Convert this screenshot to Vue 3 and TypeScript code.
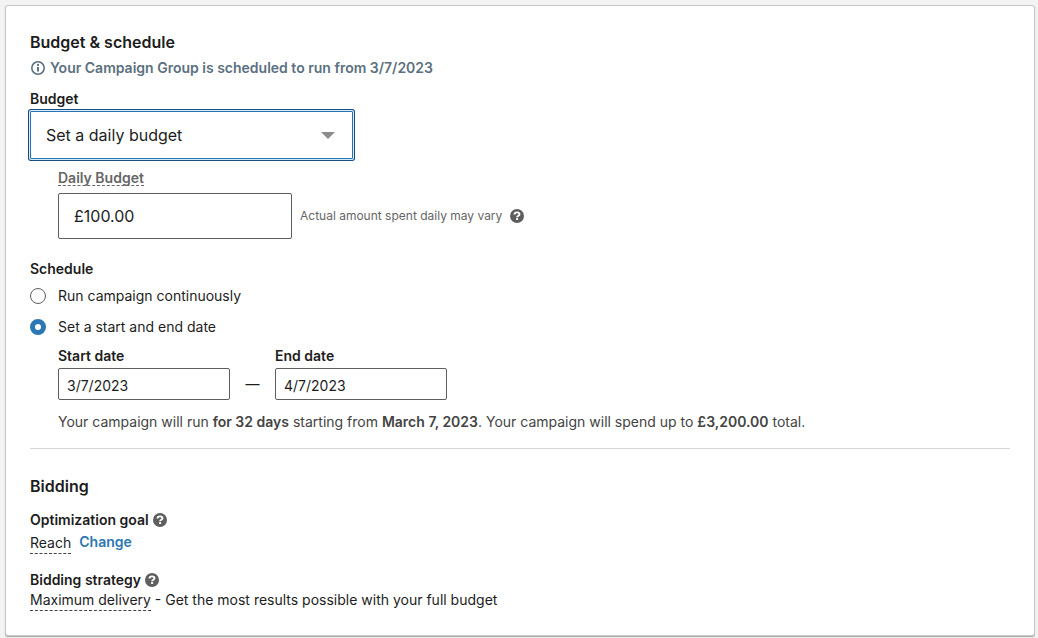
<script setup lang="ts">
import { ref } from 'vue'

const budgetType = ref('daily')
const dailyBudget = ref('£100.00')
const scheduleType = ref('range')
const startDate = ref('3/7/2023')
const endDate = ref('4/7/2023')
</script>

<template>
  <main class="page">
    <form class="card" @submit.prevent>
      <section class="block">
        <h2 class="title">Budget &amp; schedule</h2>
        <p class="notice">
          <svg class="icon" viewBox="0 0 16 16" aria-hidden="true">
            <circle cx="8" cy="8" r="6.2" fill="none" stroke="currentColor" stroke-width="1.6" />
            <circle cx="8" cy="4.9" r="1.1" fill="currentColor" />
            <path d="M7 7h2v4.6H7z" fill="currentColor" />
          </svg>
          <span>Your Campaign Group is scheduled to run from 3/7/2023</span>
        </p>

        <label class="label budget-label" for="budget-type">Budget</label>
        <div class="select-wrap">
          <select id="budget-type" v-model="budgetType" class="select">
            <option value="daily">Set a daily budget</option>
            <option value="lifetime">Set a lifetime budget</option>
          </select>
          <svg class="caret" viewBox="0 0 14 7" aria-hidden="true">
            <path d="M0 0h14L7 7z" fill="#8c8c8c" />
          </svg>
        </div>

        <div class="indent daily">
          <label class="daily-label" for="daily-budget">Daily Budget</label>
          <div class="daily-row">
            <input id="daily-budget" v-model="dailyBudget" class="amount" type="text" />
            <span class="hint">Actual amount spent daily may vary</span>
            <button class="help" type="button" aria-label="Help with daily budget">
              <svg viewBox="0 0 14 14" aria-hidden="true">
                <circle cx="7" cy="7" r="7" fill="#5e5e5e" />
                <path d="M4.5 5.5c0-1.5 1.1-2.1 2.5-2.1s2.5.7 2.5 1.9c0 1.5-2.3 1.3-2.4 2.9" fill="none" stroke="#fff" stroke-width="1.9" />
                <path d="M6.1 9.1h2v1.9h-2z" fill="#fff" />
              </svg>
            </button>
          </div>
        </div>

        <fieldset class="schedule">
          <legend class="label">Schedule</legend>
          <label class="option">
            <input v-model="scheduleType" class="radio" type="radio" name="schedule" value="continuous" />
            <span>Run campaign continuously</span>
          </label>
          <label class="option">
            <input v-model="scheduleType" class="radio" type="radio" name="schedule" value="range" />
            <span>Set a start and end date</span>
          </label>
        </fieldset>

        <div class="indent dates">
          <div class="field">
            <label class="label" for="start-date">Start date</label>
            <input id="start-date" v-model="startDate" class="date" type="text" />
          </div>
          <span class="dash">—</span>
          <div class="field">
            <label class="label" for="end-date">End date</label>
            <input id="end-date" v-model="endDate" class="date" type="text" />
          </div>
        </div>

        <p class="indent summary">
          Your campaign will run <b>for 32 days</b> starting from <b>March 7, 2023</b>. Your campaign will spend up to <b>£3,200.00</b> total.
        </p>
      </section>

      <section class="block bidding">
        <h2 class="title">Bidding</h2>
        <div class="heading goal-heading">
          <h3 class="label">Optimization goal</h3>
          <button class="help" type="button" aria-label="Help with optimization goal">
            <svg viewBox="0 0 14 14" aria-hidden="true">
              <circle cx="7" cy="7" r="7" fill="#5e5e5e" />
              <path d="M4.5 5.5c0-1.5 1.1-2.1 2.5-2.1s2.5.7 2.5 1.9c0 1.5-2.3 1.3-2.4 2.9" fill="none" stroke="#fff" stroke-width="1.9" />
              <path d="M6.1 9.1h2v1.9h-2z" fill="#fff" />
            </svg>
          </button>
        </div>
        <div class="goal">
          <span class="term">Reach</span>
          <button class="change" type="button">Change</button>
        </div>
        <div class="heading strategy-heading">
          <h3 class="label">Bidding strategy</h3>
          <button class="help" type="button" aria-label="Help with bidding strategy">
            <svg viewBox="0 0 14 14" aria-hidden="true">
              <circle cx="7" cy="7" r="7" fill="#5e5e5e" />
              <path d="M4.5 5.5c0-1.5 1.1-2.1 2.5-2.1s2.5.7 2.5 1.9c0 1.5-2.3 1.3-2.4 2.9" fill="none" stroke="#fff" stroke-width="1.9" />
              <path d="M6.1 9.1h2v1.9h-2z" fill="#fff" />
            </svg>
          </button>
        </div>
        <p class="strategy"><span class="term">Maximum delivery</span> - Get the most results possible with your full budget</p>
      </section>
    </form>
  </main>
</template>

<style>
body {
  background: #f3f3f3;
}
</style>

<style scoped>
.page,
.page * {
  box-sizing: border-box;
}

.page {
  padding: 6px 4px 3px 6px;
  font-family: Inter, "Liberation Sans", sans-serif;
  font-size: 14px;
  line-height: 20px;
  color: #1d1d1d;
}

.card {
  padding: 24px;
  background: #fff;
  border-radius: 2px;
  box-shadow: 0 0 0 1px #c8c8c8, 0 1px 1px 1px #a8a8a8;
}

h2,
h3,
p {
  margin: 0;
}

.title {
  font-size: 16px;
  line-height: 24px;
  font-weight: 600;
}

.label {
  display: block;
  padding: 0;
  font-size: 14px;
  line-height: 20px;
  font-weight: 600;
}

.notice {
  display: flex;
  align-items: center;
  gap: 4px;
  margin-top: 4px;
  font-weight: 600;
  color: #5b7080;
}

.icon {
  width: 16px;
  height: 16px;
}

.budget-label {
  margin-top: 11px;
}

.select-wrap {
  display: grid;
  align-items: center;
  width: 323px;
  max-width: 100%;
  margin-top: 2px;
}

.select {
  grid-area: 1 / 1;
  width: 100%;
  height: 48px;
  padding: 0 40px 0 15px;
  appearance: none;
  border: 1px solid #2a73b5;
  border-radius: 1px;
  outline: none;
  background: #fff;
  box-shadow: 0 0 0 1px #d5ecfa, 0 0 0 2px #1b4c80;
  font: inherit;
  font-size: 16px;
  color: inherit;
}

.caret {
  grid-area: 1 / 1;
  justify-self: end;
  width: 14px;
  height: 7px;
  margin-right: 18px;
  pointer-events: none;
}

.indent {
  margin-left: 28px;
}

.daily {
  margin-top: 9px;
}

.daily-label {
  display: inline-block;
  height: 18px;
  border-bottom: 1px dashed #666;
  font-weight: 600;
  color: #666;
}

.daily-row {
  display: flex;
  align-items: center;
  margin-top: 5px;
}

.amount {
  width: 234px;
  height: 46px;
  padding: 0 15px;
  border: 1px solid #5e5e5e;
  border-radius: 2px;
  background: #fff;
  font: inherit;
  font-size: 16px;
  color: inherit;
}

.hint {
  margin: 0 8px;
  font-size: 12px;
  color: #666;
}

.help {
  width: 14px;
  height: 14px;
  padding: 0;
  border: 0;
  background: none;
}

.help svg {
  display: block;
  width: 14px;
  height: 14px;
}

.schedule {
  margin: 20px 0 0;
  padding: 0;
  border: 0;
}

.option {
  display: flex;
  align-items: center;
  gap: 12px;
  margin-top: 11px;
}

legend + .option {
  margin-top: 7px;
}

.radio {
  width: 16px;
  height: 16px;
  margin: 0;
  appearance: none;
  border: 1px solid #5e5e5e;
  border-radius: 50%;
  background: #fff;
}

.radio:checked {
  border: 5px solid #2977b5;
}

.dates {
  display: flex;
  align-items: flex-end;
  margin-top: 9px;
}

.field {
  width: 172px;
}

.date {
  display: block;
  width: 100%;
  height: 32px;
  margin-top: 2px;
  padding: 2px 8px 0;
  border: 1px solid #5e5e5e;
  border-radius: 2px;
  background: #fff;
  font: inherit;
  color: inherit;
}

.dash {
  width: 45px;
  line-height: 32px;
  text-align: center;
}

.summary {
  margin-top: 12px;
  color: #444;
}

.summary b {
  font-weight: 600;
}

.bidding {
  margin-top: 16px;
  padding-top: 25px;
  border-top: 1px solid #d6d6d6;
}

.heading {
  display: flex;
  align-items: center;
  gap: 4px;
}

.goal-heading {
  margin-top: 12px;
}

.goal {
  display: flex;
  align-items: flex-start;
  gap: 8px;
  margin-top: 2px;
}

.term {
  display: inline-block;
  border-bottom: 1px dashed #444;
}

.goal .term {
  padding-top: 1px;
}

.change {
  padding: 0;
  border: 0;
  background: none;
  font: inherit;
  font-weight: 600;
  color: #2977b5;
}

.strategy-heading {
  margin-top: 16px;
}
</style>
